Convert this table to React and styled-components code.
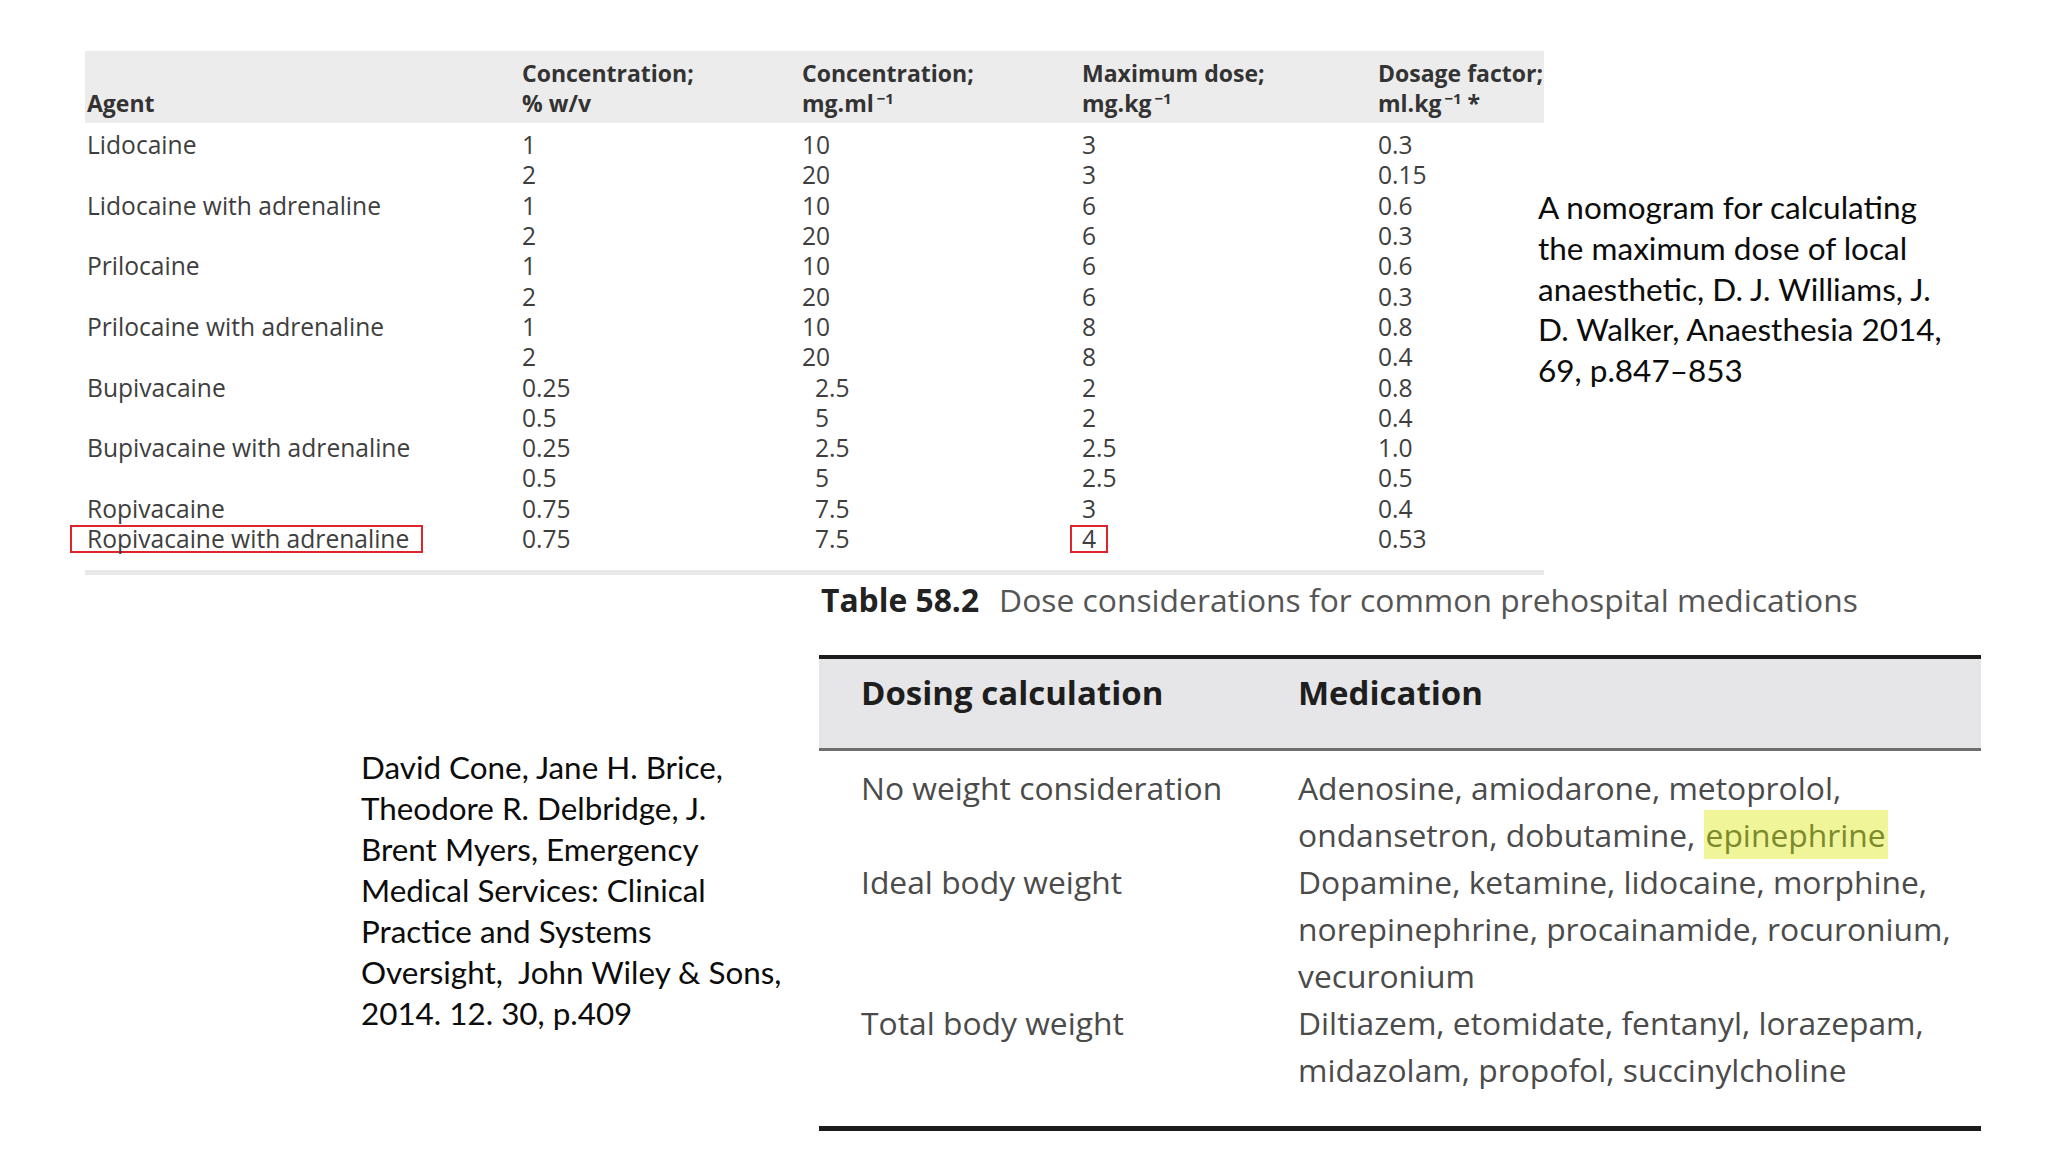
import React from 'react'
import styled, { createGlobalStyle } from 'styled-components'

const GlobalStyle = createGlobalStyle`
  html, body {
    margin: 0;
    padding: 0;
    background: #ffffff;
  }
  body {
    width: 2048px;
    height: 1152px;
    overflow: hidden;
  }
`

const agents = [
  { name: 'Lidocaine', pct: '1', mg: '10', max: '3', factor: '0.3' },
  { pct: '2', mg: '20', max: '3', factor: '0.15' },
  { name: 'Lidocaine with adrenaline', pct: '1', mg: '10', max: '6', factor: '0.6' },
  { pct: '2', mg: '20', max: '6', factor: '0.3' },
  { name: 'Prilocaine', pct: '1', mg: '10', max: '6', factor: '0.6' },
  { pct: '2', mg: '20', max: '6', factor: '0.3' },
  { name: 'Prilocaine with adrenaline', pct: '1', mg: '10', max: '8', factor: '0.8' },
  { pct: '2', mg: '20', max: '8', factor: '0.4' },
  { name: 'Bupivacaine', pct: '0.25', mg: '2.5', indent: true, max: '2', factor: '0.8' },
  { pct: '0.5', mg: '5', indent: true, max: '2', factor: '0.4' },
  { name: 'Bupivacaine with adrenaline', pct: '0.25', mg: '2.5', indent: true, max: '2.5', factor: '1.0' },
  { pct: '0.5', mg: '5', indent: true, max: '2.5', factor: '0.5' },
  { name: 'Ropivacaine', pct: '0.75', mg: '7.5', indent: true, max: '3', factor: '0.4' },
  { name: 'Ropivacaine with adrenaline', pct: '0.75', mg: '7.5', indent: true, max: '4', factor: '0.53', marked: true },
]

const doses = [
  {
    label: 'No weight consideration',
    lines: [['Adenosine, amiodarone, metoprolol,'], ['ondansetron, dobutamine, ', { hl: 'epinephrine' }]],
  },
  {
    label: 'Ideal body weight',
    lines: [
      ['Dopamine, ketamine, lidocaine, morphine,'],
      ['norepinephrine, procainamide, rocuronium,'],
      ['vecuronium'],
    ],
  },
  {
    label: 'Total body weight',
    lines: [['Diltiazem, etomidate, fentanyl, lorazepam,'], ['midazolam, propofol, succinylcholine']],
  },
]

const App = () => {
  return (
    <Page>
      <GlobalStyle />
      <TopRow>
        <AgentTable>
          <HeadRow>
            <HeadCell>Agent</HeadCell>
            <HeadCell>
              <Line>Concentration;</Line>
              <Line>% w/v</Line>
            </HeadCell>
            <HeadCell>
              <Line>Concentration;</Line>
              <Line>mg.ml<Sup>−1</Sup></Line>
            </HeadCell>
            <HeadCell>
              <Line>Maximum dose;</Line>
              <Line>mg.kg<Sup>−1</Sup></Line>
            </HeadCell>
            <HeadCell>
              <Line>Dosage factor;</Line>
              <Line>ml.kg<Sup>−1</Sup> *</Line>
            </HeadCell>
          </HeadRow>
          <AgentBody>
            {agents.map((a, i) => (
              <AgentRow key={i}>
                <Cell>{a.name && (a.marked ? <Marked $left={15} $right={12}>{a.name}</Marked> : a.name)}</Cell>
                <Cell>{a.pct}</Cell>
                <Cell $indent={a.indent}>{a.mg}</Cell>
                <Cell>{a.marked ? <Marked $left={10} $right={10}>{a.max}</Marked> : a.max}</Cell>
                <Cell>{a.factor}</Cell>
              </AgentRow>
            ))}
          </AgentBody>
          <BottomRule />
        </AgentTable>
        <Note>
          <Line>A nomogram for calculating</Line>
          <Line>the maximum dose of local</Line>
          <Line>anaesthetic, D. J. Williams, J.</Line>
          <Line>D. Walker, Anaesthesia 2014,</Line>
          <Line>69, p.847–853</Line>
        </Note>
      </TopRow>

      <BottomRow>
        <Citation>
          <Line>David Cone, Jane H. Brice,</Line>
          <Line>Theodore R. Delbridge, J.</Line>
          <Line>Brent Myers, Emergency</Line>
          <Line>Medical Services: Clinical</Line>
          <Line>Practice and Systems</Line>
          <Line>Oversight,&nbsp; John Wiley &amp; Sons,</Line>
          <Line>2014. 12. 30, p.409</Line>
        </Citation>
        <DoseBlock>
          <Caption>
            <CaptionNo>Table 58.2</CaptionNo>
            Dose considerations for common prehospital medications
          </Caption>
          <DoseTable>
            <DoseHead>
              <span>Dosing calculation</span>
              <span>Medication</span>
            </DoseHead>
            <DoseBody>
              {doses.map((d) => (
                <DoseRow key={d.label}>
                  <span>{d.label}</span>
                  <div>
                    {d.lines.map((parts, j) => (
                      <Line key={j}>
                        {parts.map((p, k) => (typeof p === 'string' ? p : <Highlight key={k}>{p.hl}</Highlight>))}
                      </Line>
                    ))}
                  </div>
                </DoseRow>
              ))}
            </DoseBody>
          </DoseTable>
        </DoseBlock>
      </BottomRow>
    </Page>
  )
}

export default App

const Page = styled.div`
  width: 2048px;
  height: 1152px;
  display: flex;
  flex-direction: column;
  background: #ffffff;
`

const TopRow = styled.div`
  display: flex;
  padding: 51px 0 0 85px;
`

const AgentTable = styled.div`
  width: 1459px;
  flex-shrink: 0;
  font-family: 'Open Sans', 'Noto Sans', sans-serif;
`

const columns = '435px 280px 280px 296px 1fr'

const HeadRow = styled.div`
  display: grid;
  grid-template-columns: ${columns};
  align-items: end;
  height: 72px;
  box-sizing: border-box;
  padding: 7px 0 5px 2px;
  background: #ececed;
  color: #333333;
  font-size: 23px;
  font-weight: 700;
  line-height: 30px;
`

const HeadCell = styled.div`
  white-space: nowrap;
`

const Line = styled.span`
  display: block;
  white-space: nowrap;
`

const Sup = styled.span`
  display: inline-block;
  vertical-align: top;
  margin-top: 3px;
  margin-left: 3px;
  font-size: 15px;
  line-height: 15px;
`

const AgentBody = styled.div`
  padding: 7px 0 0 2px;
`

const AgentRow = styled.div`
  display: grid;
  grid-template-columns: ${columns};
  align-items: center;
  height: 30.3px;
  color: #3e3e3e;
  font-size: 24.6px;
  line-height: 30px;
`

const Cell = styled.div`
  white-space: nowrap;
  padding-left: ${(p) => (p.$indent ? '13px' : '0')};
`

const Marked = styled.span`
  display: inline-block;
  margin-left: -${(p) => p.$left + 2}px;
  padding: 0 ${(p) => p.$right}px 0 ${(p) => p.$left}px;
  border: 2px solid #e0242b;
  line-height: 24px;
`

const BottomRule = styled.div`
  height: 5px;
  margin-top: 16px;
  background: #e9e9ea;
`

const Note = styled.div`
  margin-left: -6px;
  padding-top: 136px;
  font-family: Lato, 'Open Sans', sans-serif;
  font-size: 31.5px;
  line-height: 40.8px;
  color: #0c0c0c;
`

const BottomRow = styled.div`
  display: flex;
  padding-left: 361px;
`

const Citation = styled.div`
  width: 458px;
  flex-shrink: 0;
  padding-top: 172px;
  font-family: Lato, 'Open Sans', sans-serif;
  font-size: 31.4px;
  line-height: 40.9px;
  color: #0c0c0c;
`

const DoseBlock = styled.div`
  width: 1162px;
  padding-top: 7px;
  font-family: 'Open Sans', 'Noto Sans', sans-serif;
`

const Caption = styled.div`
  display: flex;
  gap: 20px;
  margin-bottom: 37px;
  padding-left: 2px;
  font-size: 31.8px;
  line-height: 36px;
  color: #555555;
  white-space: nowrap;
`

const CaptionNo = styled.span`
  font-weight: 700;
  color: #222222;
`

const DoseTable = styled.div`
  border-top: 4px solid #1c1c1c;
  border-bottom: 5px solid #1c1c1c;
`

const DoseHead = styled.div`
  display: grid;
  grid-template-columns: 437px 1fr;
  height: 92px;
  box-sizing: border-box;
  padding: 14px 0 0 42px;
  background: #e6e6e8;
  border-bottom: 3px solid #6e6e6e;
  color: #1e1e1e;
  font-size: 33px;
  font-weight: 700;
  line-height: 40px;
`

const DoseBody = styled.div`
  padding: 13px 0 33px 42px;
`

const DoseRow = styled.div`
  display: grid;
  grid-template-columns: 437px 1fr;
  color: #4b4b4b;
  font-size: 31.8px;
  line-height: 47px;
  white-space: nowrap;
`

const Highlight = styled.span`
  background: #f1f59a;
  color: #7b8a2a;
  padding: 3px 2px;
`
